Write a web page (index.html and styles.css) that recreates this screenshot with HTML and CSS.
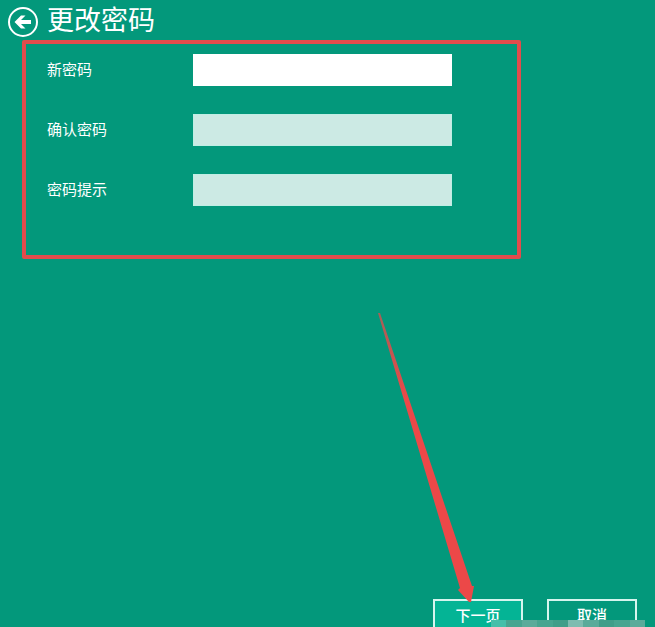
FILE: index.html
```html
<!DOCTYPE html>
<html lang="zh-CN">
<head>
    <meta charset="UTF-8">
    <meta name="viewport" content="width=device-width, initial-scale=1.0">
    <title>更改密码</title>
    <link rel="stylesheet" href="styles.css">
</head>
<body>
    <form class="page">
        <header class="header">
            <button type="button" class="back" aria-label="返回">
                <svg width="32" height="32" viewBox="0 0 32 32">
                    <circle cx="16" cy="16" r="14" fill="none" stroke="#fff" stroke-width="2"/>
                    <path d="M7.500 16 L14 9.500 H18.500 L14 14 H24 V18 H14 L18.500 22.500 H14 Z" fill="#fff"/>
                </svg>
            </button>
            <h1>更改密码</h1>
        </header>
        <main class="fields">
            <div class="field">
                <label for="new-password">新密码</label>
                <input type="password" id="new-password" class="active">
            </div>
            <div class="field">
                <label for="confirm-password">确认密码</label>
                <input type="password" id="confirm-password">
            </div>
            <div class="field">
                <label for="hint">密码提示</label>
                <input type="text" id="hint">
            </div>
        </main>
        <footer class="actions">
            <div class="next-wrap">
                <button type="button" class="btn next">下一页</button>
                <svg class="arrow" width="100" height="292" viewBox="0 0 100 292">
                    <defs>
                        <linearGradient id="fade" x1="0" y1="0" x2="0" y2="1">
                            <stop offset="0" stop-color="#ec4848" stop-opacity="0.7"/>
                            <stop offset="0.3" stop-color="#ec4848"/>
                        </linearGradient>
                    </defs>
                    <path d="M1 2 L3 2 L95 275 L97 275 L94 291 L92 291 L81 279 L83 277 Z" fill="url(#fade)"/>
                </svg>
            </div>
            <button type="button" class="btn">取消</button>
            <div class="mosaic">
                <span class="m1"></span><span class="m2"></span><span class="m3"></span><span class="m2"></span><span class="m4"></span><span class="m5"></span><span class="m3"></span><span class="m4"></span><span class="m2"></span><span class="m3"></span>
            </div>
        </footer>
    </form>
</body>
</html>
```

FILE: styles.css
```css
* {
    box-sizing: border-box;
}
body {
    margin: 0;
    background-color: #03987b;
    color: #fff;
    font-family: "Noto Sans CJK SC", sans-serif;
    overflow: hidden;
}
/* the button row runs slightly past the bottom of the window */
.page {
    display: flex;
    flex-direction: column;
    height: calc(100vh + 6px);
}
.header {
    display: flex;
    align-items: flex-start;
    gap: 8px;
    height: 40px;
    padding-left: 7px;
}
.header h1 {
    margin: 0;
    font-size: 27px;
    line-height: 38px;
    font-weight: 400;
}
.back {
    display: block;
    width: 32px;
    height: 32px;
    margin-top: 6px;
    padding: 0;
    border: none;
    background: none;
}
.back svg {
    display: block;
}
.fields {
    display: flex;
    flex-direction: column;
    gap: 28px;
    max-width: 499px;
    margin: 0 22px;
    padding: 10px 65px 49px 21px;
    border: 4px solid #e24c4c;
    border-radius: 2px;
}
.field {
    display: flex;
    align-items: flex-start;
}
.field label {
    width: 146px;
    font-size: 15px;
    line-height: 30px;
}
.field input {
    flex: 1;
    min-width: 0;
    height: 32px;
    padding: 0 8px;
    border: 1px solid #c0eee4;
    border-radius: 0;
    background-color: #cceae4;
    outline: none;
}
.field input.active {
    border-color: #fff;
    background-color: #fff;
}
.actions {
    display: flex;
    justify-content: flex-end;
    gap: 24px;
    position: relative;
    margin-top: auto;
    padding-right: 18px;
}
.next-wrap {
    position: relative;
}
.btn {
    display: block;
    width: 90px;
    height: 34px;
    padding: 0 0 2px;
    border: 2px solid #d5f5ee;
    background-color: #03987b;
    color: #fff;
    font-family: inherit;
    font-size: 15px;
    font-weight: 500;
    line-height: 28px;
}
.next {
    background-color: #04b495;
}
.arrow {
    position: absolute;
    left: -56px;
    bottom: 30px;
    pointer-events: none;
}
/* blurred strip over the lower edge of the buttons */
.mosaic {
    display: flex;
    position: absolute;
    right: 10px;
    bottom: 0;
    width: 154px;
    height: 13px;
}
.mosaic span {
    flex: 1;
}
.m1 {
    background-color: #45bfa9;
}
.m2 {
    background-color: #47a590;
}
.m3 {
    background-color: #5aab9a;
}
.m4 {
    background-color: #409e89;
}
.m5 {
    background-color: #7dbcb0;
}
```
